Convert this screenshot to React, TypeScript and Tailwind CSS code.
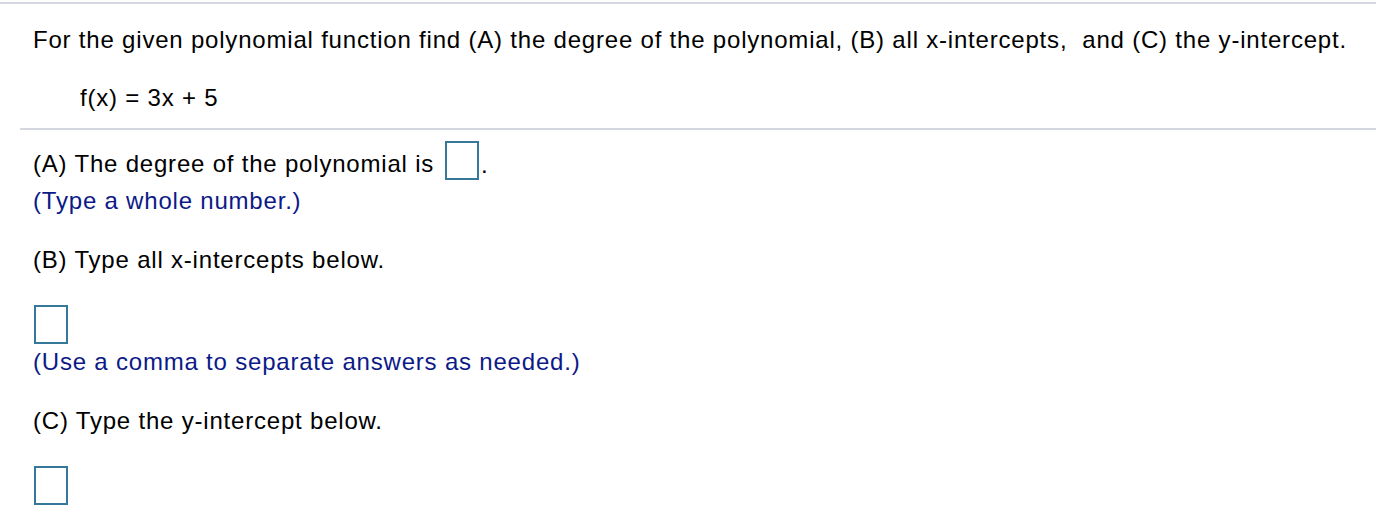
import React from 'react';

// ============================================================================
// Answer box
// ============================================================================

function AnswerBox() {
  return <span className="inline-block shrink-0 w-[34px] h-[39px] border-2 border-[#35789a] bg-white" />;
}

// ============================================================================
// App
// ============================================================================

export default function App() {
  return (
    <div
      className="w-[1376px] h-[524px] bg-white text-black overflow-hidden text-[24px] leading-[28px] tracking-[0.8px]"
      style={{ fontFamily: '"Liberation Sans", Arial, sans-serif' }}
    >
      <div className="mt-[2px] border-t-2 border-[#d4d7df]" />

      {/* Question */}
      <div className="pl-[33px] pt-[22px] whitespace-nowrap">
        For the given polynomial function find (A) the degree of the polynomial, (B) all x-intercepts,&nbsp; and (C)
        the y-intercept.
      </div>
      <div className="pl-[80px] mt-[30px]">f(x) = 3x + 5</div>

      <div className="ml-[20px] mt-[16px] border-t-2 border-[#d4d7df]" />

      {/* Part A */}
      <div className="pl-[33px] mt-[14px]">
        <div className="flex items-center h-[39px]">
          <span>(A) The degree of the polynomial is</span>
          <span className="ml-[11px]">
            <AnswerBox />
          </span>
          <span className="ml-[2px] self-end mb-[4px]">.</span>
        </div>
        <div className="mt-[4px] text-[#0c1a88]">(Type a whole number.)</div>

        {/* Part B */}
        <div className="mt-[31px]">(B) Type all x-intercepts below.</div>
        <div className="mt-[31px] flex pl-[1px]">
          <AnswerBox />
        </div>
        <div className="mt-[4px] text-[#0c1a88]">(Use a comma to separate answers as needed.)</div>

        {/* Part C */}
        <div className="mt-[31px]">(C) Type the y-intercept below.</div>
        <div className="mt-[31px] flex pl-[1px]">
          <AnswerBox />
        </div>
      </div>
    </div>
  );
}
